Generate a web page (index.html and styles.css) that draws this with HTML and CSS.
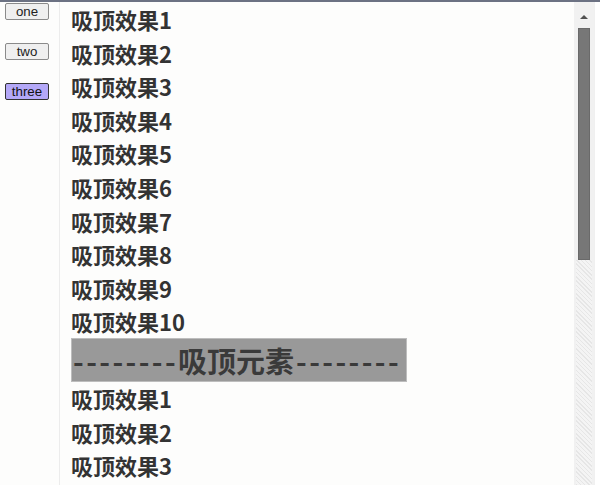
FILE: index.html
```html
<!DOCTYPE html>
<html>
<head>
<meta charset="utf-8">
<link rel="stylesheet" href="styles.css">
</head>
<body>
<div class="frame">
  <aside class="side">
    <button class="btn">one</button>
    <button class="btn">two</button>
    <button class="btn active">three</button>
  </aside>
  <main class="main">
    <div class="row">吸顶效果1</div>
    <div class="row">吸顶效果2</div>
    <div class="row">吸顶效果3</div>
    <div class="row">吸顶效果4</div>
    <div class="row">吸顶效果5</div>
    <div class="row">吸顶效果6</div>
    <div class="row">吸顶效果7</div>
    <div class="row">吸顶效果8</div>
    <div class="row">吸顶效果9</div>
    <div class="row">吸顶效果10</div>
    <div class="sticky"><span class="dash">--------</span>吸顶元素<span class="dash dash-r">--------</span></div>
    <div class="row">吸顶效果1</div>
    <div class="row">吸顶效果2</div>
    <div class="row">吸顶效果3</div>
  </main>
  <div class="scrollbar">
    <div class="arrow"></div>
    <div class="thumb"></div>
    <div class="track"></div>
  </div>
  <div class="gutter"></div>
</div>
</body>
</html>
```
FILE: styles.css
```css
html, body {
  margin: 0;
  padding: 0;
  height: 485px;
  overflow: hidden;
  background: #fdfdfc;
}
.frame {
  display: flex;
  height: 483px;
  border-top: 2px solid #6c7283;
}
.side {
  width: 60px;
  flex: none;
  border-right: 1px solid #ececec;
  display: flex;
  flex-direction: column;
  align-items: flex-start;
  gap: 23px;
  padding: 1px 0 0 5px;
  box-sizing: border-box;
}
.btn {
  font-family: "Liberation Sans", Arial, sans-serif;
  font-size: 13.3px;
  height: 17px;
  width: 44px;
  padding: 0;
  line-height: 15px;
  background: #efefef;
  border: 1px solid #8a8a8a;
  border-radius: 2px;
  color: #222;
}
.btn.active {
  background: #b4a8f8;
  border-color: #333;
  color: #111;
}
.main {
  flex: 1;
  padding: 1px 0 0 11px;
  overflow: hidden;
  font-family: "Noto Sans CJK SC", "Noto Sans", sans-serif;
  font-weight: bold;
  color: #333;
}
.row {
  font-size: 22px;
  line-height: 33.6px;
  white-space: nowrap;
}
.sticky {
  width: 336px;
  height: 44px;
  background: #999;
  border: 1px solid #bdbdbd;
  box-sizing: border-box;
  font-size: 29px;
  line-height: 42px;
  padding-left: 1px;
  white-space: nowrap;
  color: #3a3a3a;
  margin: -1px 0 0;
}
.dash {
  letter-spacing: 2.4px;
}
.dash-r {
  margin-left: 2px;
  letter-spacing: 2.4px;
}
.scrollbar {
  width: 20px;
  flex: none;
  display: flex;
  flex-direction: column;
  align-items: center;
  background: #f1f1f1;
}
.arrow {
  margin-top: 13px;
  width: 0;
  height: 0;
  border-left: 4px solid transparent;
  border-right: 4px solid transparent;
  border-bottom: 4px solid #505050;
}
.thumb {
  margin-top: 9px;
  width: 12px;
  height: 232px;
  background: #777;
  border: 1px solid #6a6a6a;
  box-sizing: border-box;
}
.track {
  flex: 1;
  width: 16px;
  background-color: #f4f4f4;
  background-image: repeating-linear-gradient(45deg, #e6e6e6 0 1px, transparent 1px 3px);
}
.gutter {
  width: 5px;
  flex: none;
  border-left: 1px solid #f0f0f0;
  background: #fff;
}
```
